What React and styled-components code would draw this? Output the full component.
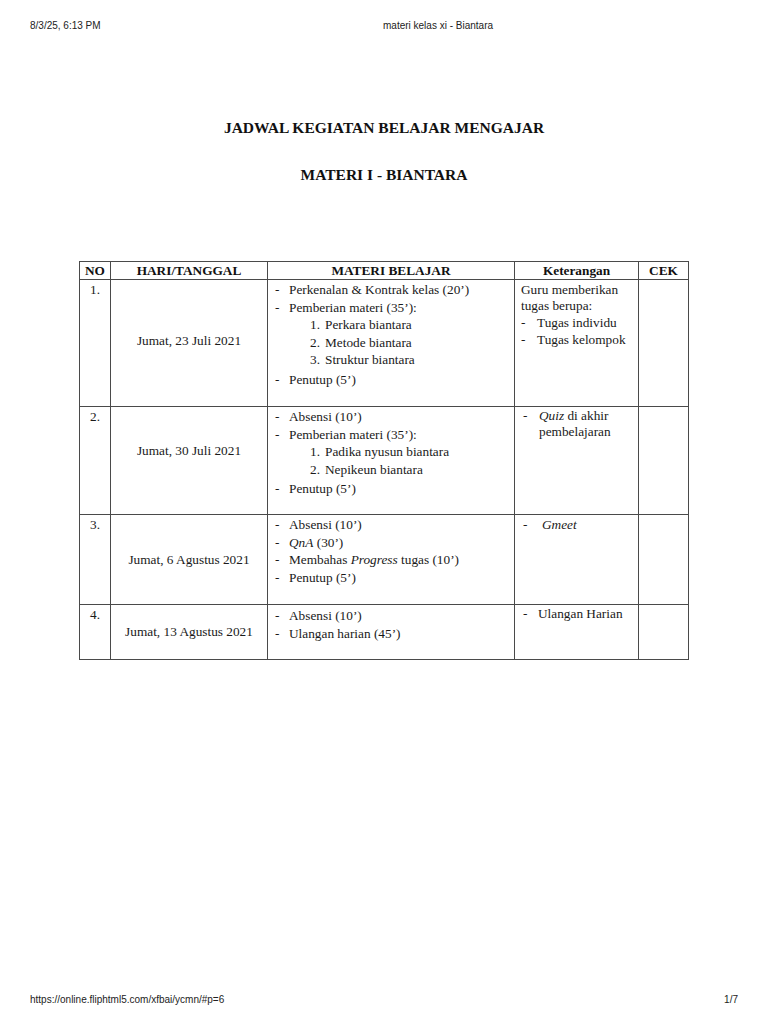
import React from "react";
import styled, { createGlobalStyle } from "styled-components";

const GlobalStyle = createGlobalStyle`
  html, body { margin: 0; padding: 0; background: #fff; }
  body { font-family: "Liberation Serif", "Times New Roman", serif; color: #111; }
`;

const Page = styled.div`
  width: 768px;
  height: 1024px;
  display: flex;
  flex-direction: column;
  background: #fff;
`;

const PrintBar = styled.div`
  display: flex;
  align-items: center;
  justify-content: space-between;
  padding: ${(p) => (p.$bottom ? "0 30px 18px" : "20px 30px 0")};
  margin-top: ${(p) => (p.$bottom ? "auto" : "0")};
  font-family: "Liberation Sans", Arial, sans-serif;
  font-size: 10px;
  line-height: 12px;
  color: #222;
`;

const PrintDate = styled.span`
  width: 353px;
  flex: none;
`;

const PrintTitle = styled.span`
  flex: 1;
`;

const Doc = styled.main`
  display: flex;
  flex-direction: column;
  align-items: center;
  padding-top: 87px;
`;

const Title = styled.h1`
  margin: 0 0 ${(p) => p.$after}px;
  font-size: 15.5px;
  line-height: 18px;
  font-weight: bold;
  color: #111;
  text-align: center;
`;

const Table = styled.table`
  border-collapse: collapse;
  table-layout: fixed;
  width: 609px;
  margin-top: 77px;
  font-size: 13.3px;
  color: #1a1a1a;
`;

const Th = styled.th`
  border: 1px solid #4a4a4a;
  height: 17px;
  padding: 0;
  font-weight: bold;
  line-height: 17px;
  text-align: center;
  vertical-align: middle;
  color: #111;
`;

const Tr = styled.tr`
  height: ${(p) => p.$h}px;
`;

const Td = styled.td`
  border: 1px solid #4a4a4a;
  padding: ${(p) => p.$pad || "1px 4px 0 6px"};
  vertical-align: ${(p) => (p.$middle ? "middle" : "top")};
  text-align: ${(p) => (p.$center ? "center" : "left")};
  line-height: 17.5px;
`;

const Item = styled.div`
  display: flex;
  margin-top: ${(p) => p.$gap || 0}px;
  padding-left: ${(p) => p.$indent || 0}px;
  line-height: ${(p) => p.$lh || 17.5}px;
`;

const Mark = styled.span`
  flex: none;
  width: ${(p) => p.$w || 14}px;
`;

const Para = styled.div`
  line-height: 16px;
`;

const Em = styled.i`
  font-style: italic;
`;

const Dash = ({ children, gap, w, lh }) => (
  <Item $gap={gap} $lh={lh}>
    <Mark $w={w}>-</Mark>
    <span>{children}</span>
  </Item>
);

const Num = ({ n, children }) => (
  <Item $indent={35}>
    <Mark $w={15}>{n}.</Mark>
    <span>{children}</span>
  </Item>
);

export default function App() {
  return (
    <>
      <GlobalStyle />
      <Page>
        <PrintBar>
          <PrintDate>8/3/25, 6:13 PM</PrintDate>
          <PrintTitle>materi kelas xi - Biantara</PrintTitle>
        </PrintBar>
        <Doc>
          <Title $after={29}>JADWAL KEGIATAN BELAJAR MENGAJAR</Title>
          <Title $after={0}>MATERI I - BIANTARA</Title>
          <Table>
            <colgroup>
              <col style={{ width: 31 }} />
              <col style={{ width: 157 }} />
              <col style={{ width: 247 }} />
              <col style={{ width: 124 }} />
              <col style={{ width: 50 }} />
            </colgroup>
            <thead>
              <tr>
                <Th>NO</Th>
                <Th>HARI/TANGGAL</Th>
                <Th>MATERI BELAJAR</Th>
                <Th>Keterangan</Th>
                <Th>CEK</Th>
              </tr>
            </thead>
            <tbody>
              <Tr $h={127}>
                <Td $center $pad="1px 0 0">1.</Td>
                <Td $center $middle $pad="0 0 4px">Jumat, 23 Juli 2021</Td>
                <Td $pad="1px 4px 0 7px">
                  <Dash>Perkenalan &amp; Kontrak kelas (20’)</Dash>
                  <Dash>Pemberian materi (35’):</Dash>
                  <Num n={1}>Perkara biantara</Num>
                  <Num n={2}>Metode biantara</Num>
                  <Num n={3}>Struktur biantara</Num>
                  <Dash gap={2}>Penutup (5’)</Dash>
                </Td>
                <Td $pad="2px 4px 0 6px">
                  <Para>Guru memberikan</Para>
                  <Para>tugas berupa:</Para>
                  <Dash w={16} lh={17}>Tugas individu</Dash>
                  <Dash w={16} lh={17}>Tugas kelompok</Dash>
                </Td>
                <Td />
              </Tr>
              <Tr $h={108}>
                <Td $center $pad="1px 0 0">2.</Td>
                <Td $center $middle $pad="0 0 20px">Jumat, 30 Juli 2021</Td>
                <Td $pad="1px 4px 0 7px">
                  <Dash>Absensi (10’)</Dash>
                  <Dash>Pemberian materi (35’):</Dash>
                  <Num n={1}>Padika nyusun biantara</Num>
                  <Num n={2}>Nepikeun biantara</Num>
                  <Dash gap={2}>Penutup (5’)</Dash>
                </Td>
                <Td $pad="1px 4px 0 8px">
                  <Dash w={16} lh={16}>
                    <Em>Quiz</Em> di akhir
                  </Dash>
                  <Item $indent={16} $lh={16}>pembelajaran</Item>
                </Td>
                <Td />
              </Tr>
              <Tr $h={90}>
                <Td $center $pad="1px 0 0">3.</Td>
                <Td $center $middle $pad="0">Jumat, 6 Agustus 2021</Td>
                <Td $pad="1px 4px 0 7px">
                  <Dash>Absensi (10’)</Dash>
                  <Dash>
                    <Em>QnA</Em> (30’)
                  </Dash>
                  <Dash>
                    Membahas <Em>Progress</Em> tugas (10’)
                  </Dash>
                  <Dash>Penutup (5’)</Dash>
                </Td>
                <Td $pad="1px 4px 0 8px">
                  <Dash w={19}>
                    <Em>Gmeet</Em>
                  </Dash>
                </Td>
                <Td />
              </Tr>
              <Tr $h={55}>
                <Td $center $pad="1px 0 0">4.</Td>
                <Td $center $middle $pad="0">Jumat, 13 Agustus 2021</Td>
                <Td $pad="2px 4px 0 7px">
                  <Dash>Absensi (10’)</Dash>
                  <Dash>Ulangan harian (45’)</Dash>
                </Td>
                <Td $pad="0 4px 0 8px">
                  <Dash w={15}>Ulangan Harian</Dash>
                </Td>
                <Td />
              </Tr>
            </tbody>
          </Table>
        </Doc>
        <PrintBar $bottom>
          <span>https://online.fliphtml5.com/xfbai/ycmn/#p=6</span>
          <span>1/7</span>
        </PrintBar>
      </Page>
    </>
  );
}
